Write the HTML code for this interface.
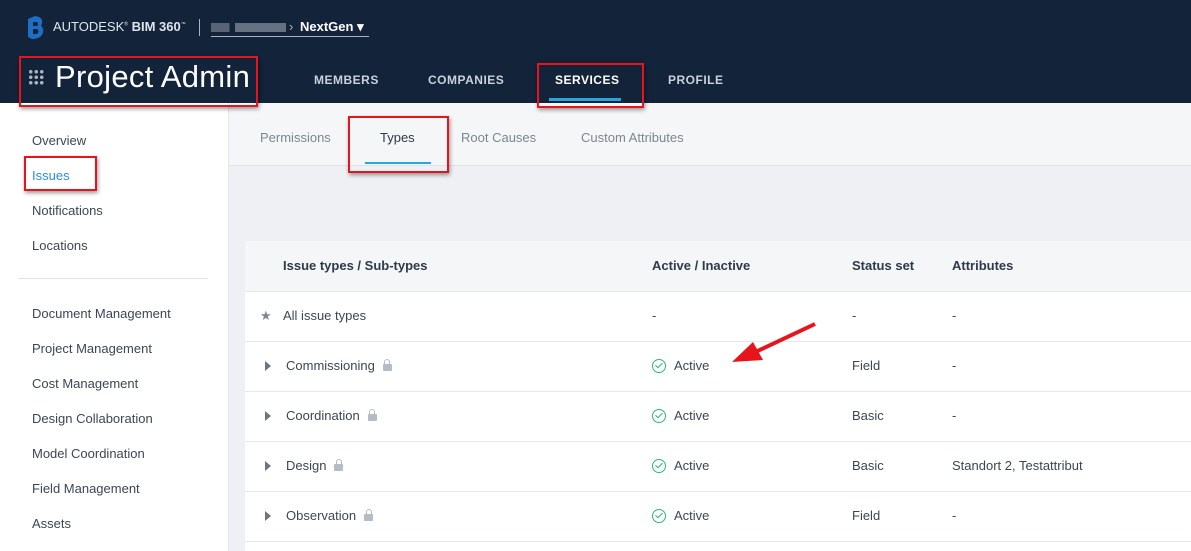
<!DOCTYPE html><html><head><style>
body{margin:0;width:1191px;height:551px;overflow:hidden;font-family:"Liberation Sans",sans-serif;background:#eef0f3;position:relative}
.a{position:absolute}
.hdr{left:0;top:0;width:1191px;height:103px;background:#13233a}
.side{left:0;top:103px;width:228px;height:448px;background:#fff;border-right:1px solid #e3e6ea}
.side div{position:absolute;left:32px;font-size:13px;color:#3c4654}
.tabs{left:229px;top:103px;width:962px;height:62px;background:#f5f6f8;border-bottom:1px solid #dfe2e6}
.t{font-size:13px;color:#7b8693}
.tbl{left:245px;top:241px;width:946px;height:310px;background:#fff}
.row{position:absolute;left:0;width:946px;height:50px;border-bottom:1px solid #e6e9ec;font-size:13px;color:#3c4654}
.row span{position:absolute;top:17px}
.red{position:absolute;border:2px solid #e8141b;box-shadow:1px 2px 4px rgba(0,0,0,.4)}
.nav{font-size:12px;font-weight:bold;color:#c9d1db;letter-spacing:.5px;top:73px}
.chk{display:inline-block;width:12px;height:12px;border:1.5px solid #2fb67c;border-radius:50%;position:relative;top:-1px;vertical-align:middle;margin-right:8px}
.chk:after{content:"";position:absolute;left:3.5px;top:1.5px;width:3px;height:6px;border:solid #2fb67c;border-width:0 1.5px 1.5px 0;transform:rotate(45deg)}
.lock{display:inline-block;width:9px;height:7px;background:#b4bcc5;border-radius:1px;margin-left:8px;position:relative;top:1px}
.lock:before{content:"";position:absolute;left:1.5px;top:-5px;width:4px;height:5px;border:1.5px solid #b4bcc5;border-bottom:0;border-radius:3px 3px 0 0}
.tri{width:0;height:0;border-left:6px solid #6b7682;border-top:5px solid transparent;border-bottom:5px solid transparent;position:absolute;left:20px;top:20px}
</style></head><body>
<div class="a hdr"></div>
<svg class="a" style="left:27px;top:16px" width="18" height="24"><path d="M1 3 L8 0 L12 1 Q17 3 14 10 Q18 13 15 19 Q12 23 5 23 L1 21 Z" fill="#1e6fc4"/><path d="M6 6 L10 6 Q12 8 10 10 L6 10 Z M6 13 L10 13 Q13 15 10 18 L6 18Z" fill="#13233a"/></svg>
<div class="a" style="left:53px;top:19px;font-size:13px;color:#dfe5ec;white-space:nowrap">AUTODESK<sup style="font-size:5px">®</sup> <b>BIM 360</b><sup style="font-size:5px">™</sup></div>
<div class="a" style="left:199px;top:19px;width:1px;height:17px;background:#aab4c0"></div>
<div class="a" style="left:211px;top:23px;width:75px;height:9px;background:linear-gradient(90deg,#6a7584 0 25%,transparent 25% 32%,#7a8594 32% 100%);opacity:.8"></div>
<div class="a" style="left:289px;top:19px;font-size:13px;color:#aab4c0">›</div>
<div class="a" style="left:300px;top:19px;font-size:13px;color:#fff;font-weight:bold">NextGen ▾</div>
<div class="a" style="left:211px;top:36px;width:158px;height:1px;background:#aab4c0"></div>
<div class="a" style="left:28px;top:69px;width:16px;height:16px;background:radial-gradient(circle,#aab4c0 1.6px,transparent 2px) 0 0/5.5px 5.5px"></div>
<div class="a" style="left:55px;top:59px;font-size:31px;color:#fff;letter-spacing:.3px">Project Admin</div>
<div class="a nav" style="left:314px">MEMBERS</div>
<div class="a nav" style="left:428px">COMPANIES</div>
<div class="a nav" style="left:555px;color:#fff">SERVICES</div>
<div class="a" style="left:549px;top:98px;width:72px;height:3px;background:#2aa6df"></div>
<div class="a nav" style="left:668px">PROFILE</div>
<div class="a side">
<div style="top:30px">Overview</div><div style="top:65px;color:#2a8fd4">Issues</div><div style="top:100px">Notifications</div><div style="top:135px">Locations</div>
<div style="top:175px;left:18px;width:190px;height:1px;background:#dfe2e6"></div>
<div style="top:203px">Document Management</div><div style="top:238px">Project Management</div><div style="top:273px">Cost Management</div><div style="top:308px">Design Collaboration</div><div style="top:343px">Model Coordination</div><div style="top:378px">Field Management</div><div style="top:413px">Assets</div>
</div>
<div class="a tabs"></div>
<div class="a t" style="left:260px;top:130px">Permissions</div>
<div class="a t" style="left:380px;top:130px;color:#2d3a48">Types</div>
<div class="a" style="left:365px;top:162px;width:66px;height:2px;background:#2aa6df"></div>
<div class="a t" style="left:461px;top:130px">Root Causes</div>
<div class="a t" style="left:581px;top:130px">Custom Attributes</div>
<div class="a tbl">
<div class="row" style="top:0;background:#f5f6f8;font-weight:bold;color:#2d3a48"><span style="left:38px">Issue types / Sub-types</span><span style="left:407px">Active / Inactive</span><span style="left:607px">Status set</span><span style="left:707px">Attributes</span></div>
<div class="row" style="top:50px"><span style="left:15px;color:#7b8693">★</span><span style="left:38px">All issue types</span><span style="left:407px">-</span><span style="left:607px">-</span><span style="left:707px">-</span></div>
<div class="row" style="top:100px"><i class="tri"></i><span style="left:41px">Commissioning<i class="lock"></i></span><span style="left:407px"><i class="chk"></i>Active</span><span style="left:607px">Field</span><span style="left:707px">-</span></div>
<div class="row" style="top:150px"><i class="tri"></i><span style="left:41px">Coordination<i class="lock"></i></span><span style="left:407px"><i class="chk"></i>Active</span><span style="left:607px">Basic</span><span style="left:707px">-</span></div>
<div class="row" style="top:200px"><i class="tri"></i><span style="left:41px">Design<i class="lock"></i></span><span style="left:407px"><i class="chk"></i>Active</span><span style="left:607px">Basic</span><span style="left:707px">Standort 2, Testattribut</span></div>
<div class="row" style="top:250px"><i class="tri"></i><span style="left:41px">Observation<i class="lock"></i></span><span style="left:407px"><i class="chk"></i>Active</span><span style="left:607px">Field</span><span style="left:707px">-</span></div>
</div>
<div class="red" style="left:19px;top:56px;width:235px;height:47px"></div>
<div class="red" style="left:537px;top:63px;width:103px;height:41px"></div>
<div class="red" style="left:348px;top:116px;width:97px;height:53px"></div>
<div class="red" style="left:24px;top:156px;width:69px;height:31px"></div>
<svg class="a" style="left:725px;top:318px" width="100" height="50"><line x1="90" y1="6" x2="22" y2="38" stroke="#e8141b" stroke-width="4"/><polygon points="7,44 28,24 38,42" fill="#e8141b"/></svg>
</body></html>
